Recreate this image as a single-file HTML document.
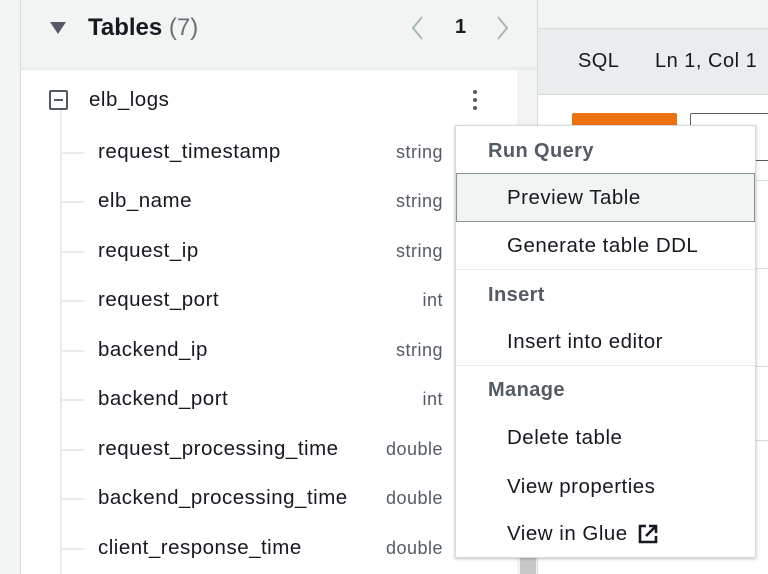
<!DOCTYPE html>
<html><head><style>
*{margin:0;padding:0;box-sizing:border-box}
body{width:768px;height:574px;overflow:hidden;background:#f2f3f3;font-family:"Liberation Sans",sans-serif;position:relative;color:#16191f}
.a{position:absolute;white-space:nowrap}
.row{font-size:20.5px;line-height:24px;letter-spacing:0.5px}
.typ{font-size:18px;color:#545b64;text-align:right;width:100px;letter-spacing:0.5px}
.dash{position:absolute;left:62px;width:22px;height:2px;background:#e9ebed}
.mi{position:absolute;left:51px;font-size:20.5px;line-height:24px;letter-spacing:0.5px}
.mh{position:absolute;left:32px;font-size:20px;font-weight:bold;color:#545b64;line-height:24px;letter-spacing:0.4px}
.sep{position:absolute;left:0;right:0;height:1px;background:#e9ebed}
</style></head><body>
<div class="a" style="left:20px;top:0;width:1px;height:574px;background:#d5dbdb"></div>
<div class="a" style="left:21px;top:0;width:517px;height:68px;background:#f2f3f3"></div>
<div class="a" style="left:21px;top:67px;width:517px;height:3px;background:#eaeded"></div>
<div class="a" style="left:50px;top:22px;width:0;height:0;border-left:8px solid transparent;border-right:8px solid transparent;border-top:12px solid #545b64"></div>
<div class="a" style="left:88px;top:14px;font-size:24px;font-weight:bold;line-height:28px">Tables <span style="font-weight:normal;color:#687078">(7)</span></div>
<svg class="a" style="left:410px;top:15px" width="14" height="26"><path d="M12 2L3 13L12 24" stroke="#aab7b8" stroke-width="2" fill="none"/></svg>
<div class="a" style="left:455px;top:16px;font-size:20px;font-weight:bold">1</div>
<svg class="a" style="left:496px;top:15px" width="14" height="26"><path d="M2 2L11 13L2 24" stroke="#aab7b8" stroke-width="2" fill="none"/></svg>
<div class="a" style="left:21px;top:70px;width:496px;height:504px;background:#fff"></div>
<div class="a" style="left:517px;top:70px;width:21px;height:504px;background:#f2f3f3"></div>
<div class="a" style="left:520px;top:555px;width:16px;height:19px;background:#c8c8c8"></div>
<div class="a" style="left:537px;top:0;width:1px;height:574px;background:#d5dbdb"></div>
<!-- right side -->
<div class="a" style="left:538px;top:0;width:230px;height:28px;background:#f2f3f3"></div>
<div class="a" style="left:538px;top:28px;width:230px;height:67px;background:#eaeded;border-top:1px solid #d5dbdb;border-bottom:1px solid #d5dbdb"></div>
<div class="a" style="left:578px;top:50px;font-size:20px;letter-spacing:0.4px">SQL</div>
<div class="a" style="left:655px;top:50px;font-size:20px;letter-spacing:0.5px">Ln 1, Col 1</div>
<div class="a" style="left:538px;top:95px;width:230px;height:479px;background:#fff"></div>
<div class="a" style="left:572px;top:113px;width:105px;height:20px;background:#ec7211;border-radius:2px"></div>
<div class="a" style="left:690px;top:113px;width:90px;height:48px;border:1px solid #545b64;border-radius:2px"></div>
<div class="a" style="left:740px;top:180px;width:28px;height:1px;background:#d5dbdb"></div>
<div class="a" style="left:740px;top:268px;width:28px;height:1px;background:#d5dbdb"></div>
<div class="a" style="left:740px;top:366px;width:28px;height:1px;background:#d5dbdb"></div>
<div class="a" style="left:740px;top:440px;width:28px;height:1px;background:#d5dbdb"></div>
<!-- tree -->
<div class="a" style="left:49px;top:90px;width:19px;height:20px;border:2px solid #545b64;border-radius:2px"></div>
<div class="a" style="left:54px;top:99px;width:9px;height:2px;background:#545b64"></div>
<div class="a" style="left:60px;top:110px;width:2px;height:464px;background:#e9ebed"></div>
<div class="a row" style="left:89px;top:88px">elb_logs</div>
<div class="a" style="left:473px;top:90px;width:4px;height:4px;border-radius:50%;background:#545b64;box-shadow:0 8px 0 #545b64,0 16px 0 #545b64"></div>
<div class="dash" style="top:152px"></div><div class="a row" style="left:98px;top:140px">request_timestamp</div><div class="a typ" style="left:343px;top:142px">string</div>
<div class="dash" style="top:201px"></div><div class="a row" style="left:98px;top:189px">elb_name</div><div class="a typ" style="left:343px;top:191px">string</div>
<div class="dash" style="top:251px"></div><div class="a row" style="left:98px;top:239px">request_ip</div><div class="a typ" style="left:343px;top:241px">string</div>
<div class="dash" style="top:300px"></div><div class="a row" style="left:98px;top:288px">request_port</div><div class="a typ" style="left:343px;top:290px">int</div>
<div class="dash" style="top:350px"></div><div class="a row" style="left:98px;top:338px">backend_ip</div><div class="a typ" style="left:343px;top:340px">string</div>
<div class="dash" style="top:399px"></div><div class="a row" style="left:98px;top:387px">backend_port</div><div class="a typ" style="left:343px;top:389px">int</div>
<div class="dash" style="top:449px"></div><div class="a row" style="left:98px;top:437px">request_processing_time</div><div class="a typ" style="left:343px;top:439px">double</div>
<div class="dash" style="top:498px"></div><div class="a row" style="left:98px;top:486px">backend_processing_time</div><div class="a typ" style="left:343px;top:488px">double</div>
<div class="dash" style="top:548px"></div><div class="a row" style="left:98px;top:536px">client_response_time</div><div class="a typ" style="left:343px;top:538px">double</div>
<!-- menu -->
<div class="a" style="left:455px;top:125px;width:301px;height:433px;background:#fff;border:1px solid #d5dbdb;box-shadow:0 1px 3px rgba(0,0,0,.25)">
<div class="mh" style="top:13px">Run Query</div>
<div class="a" style="left:0;top:47px;width:299px;height:49px;background:#f2f3f3;border:1px solid #879596"></div>
<div class="mi" style="top:60px">Preview Table</div>
<div class="mi" style="top:108px">Generate table DDL</div>
<div class="sep" style="top:143px"></div>
<div class="mh" style="top:157px">Insert</div>
<div class="mi" style="top:204px">Insert into editor</div>
<div class="sep" style="top:239px"></div>
<div class="mh" style="top:252px">Manage</div>
<div class="mi" style="top:300px">Delete table</div>
<div class="mi" style="top:349px">View properties</div>
<div class="mi" style="top:396px">View in Glue</div>
<svg class="a" style="left:181px;top:397px" width="22" height="22" viewBox="0 0 22 22"><path d="M9 3H3V19H19V13" stroke="#16191f" stroke-width="2.6" fill="none"/><path d="M12 3H19V10M19 3L9 13" stroke="#16191f" stroke-width="2.6" fill="none"/></svg>
</div>
</body></html>
